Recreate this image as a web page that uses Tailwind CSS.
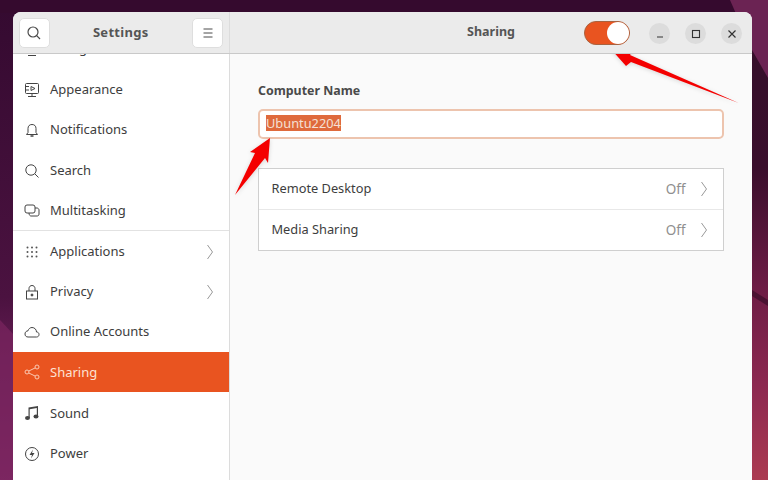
<!DOCTYPE html>
<html><head><meta charset="utf-8">
<script src="https://cdn.jsdelivr.net/npm/@tailwindcss/browser@4"></script>
</head>
<body class="m-0 overflow-hidden">
<div class="relative w-[768px] h-[480px] overflow-hidden pl-[12.5px] pr-4 pt-3 font-['Noto_Sans',sans-serif] bg-[#32082e]">
  <!-- wallpaper -->
  <svg class="absolute inset-0" width="768" height="480" viewBox="0 0 768 480">
    <defs>
      <linearGradient id="l" x1="0" y1="0" x2="0" y2="1"><stop offset="0" stop-color="#340a30"/><stop offset="0.62" stop-color="#4b1240"/><stop offset="0.72" stop-color="#5f1a4e"/><stop offset="1" stop-color="#7f2864"/></linearGradient>
      <linearGradient id="r" x1="0" y1="0" x2="0" y2="1"><stop offset="0" stop-color="#33102a"/><stop offset="0.35" stop-color="#3a0e2c"/><stop offset="0.6" stop-color="#6d1c45"/><stop offset="0.8" stop-color="#8c2850"/><stop offset="1" stop-color="#ab3a50"/></linearGradient>
    </defs>
    <rect x="0" y="0" width="14" height="480" fill="url(#l)"/>
    <rect x="750" y="0" width="18" height="480" fill="url(#r)"/>
    <rect x="0" y="0" width="768" height="13" fill="#350a2e"/>
    <path d="M730 0H768V78L752 50Z" fill="#6b2353"/>
    <path d="M752 290L768 300V306L752 296Z" fill="#4a1232"/>
    <path d="M0 320L14 335V480H0Z" fill="#7a2560" opacity=".7"/>
  </svg>
  <div class="relative flex flex-col w-[739.5px] h-[480px] rounded-t-[8px] overflow-hidden bg-[#fafafa] text-[#3d3d3d]">
    <div class="relative z-10 flex h-[42px] shrink-0 bg-[#ebebeb] border-b border-[#c9c9c9]">
      <div class="flex items-center justify-between w-[217.5px] pl-[6px] pr-[6px] border-r border-[#dcdcdc] shrink-0">
        <div class="w-[31px] h-[30px] bg-white rounded-[5px] border border-[#dedede] flex items-center justify-center">
          <svg width="16" height="16" viewBox="0 0 16 16" fill="none" stroke="#4a4a4a" stroke-width="1.2"><circle cx="7" cy="7" r="5"/><path d="M10.7 10.7L14 14"/></svg>
        </div>
        <span class="text-[13px] font-bold text-[#555] tracking-[0.3px]">Settings</span>
        <div class="w-[31px] h-[30px] bg-white rounded-[5px] border border-[#dedede] flex items-center justify-center">
          <svg width="14" height="14" viewBox="0 0 14 14" fill="none" stroke="#4a4a4a" stroke-width="1"><path d="M2.500 3H11.500M2.500 7H11.500M2.500 11H11.500"/></svg>
        </div>
      </div>
      <div class="flex-1 flex items-center relative">
        <span class="w-full text-center text-[12.5px] font-bold text-[#555]">Sharing</span>
        <div class="absolute left-[354px] top-[9px] w-[46px] h-[24px] rounded-full bg-[#e95420] border border-[#a9623f]">
          <div class="absolute right-0 top-0 w-[22px] h-[22px] rounded-full bg-white"></div>
        </div>
        <div class="absolute left-[419px] top-[11px] flex gap-[15px]">
          <div class="w-[21px] h-[21px] rounded-full bg-[#dcdcdc] flex items-center justify-center"><svg width="12" height="12" viewBox="0 0 12 12" fill="none" stroke="#333" stroke-width="1.1"><path d="M3 9H9"/></svg></div>
          <div class="w-[21px] h-[21px] rounded-full bg-[#dcdcdc] flex items-center justify-center"><svg width="12" height="12" viewBox="0 0 12 12" fill="none" stroke="#333" stroke-width="1.1"><rect x="2.500" y="2.500" width="7" height="7"/></svg></div>
          <div class="w-[21px] h-[21px] rounded-full bg-[#dcdcdc] flex items-center justify-center"><svg width="12" height="12" viewBox="0 0 12 12" fill="none" stroke="#333" stroke-width="1.2"><path d="M2.500 2.500L9.500 9.500M9.500 2.500L2.500 9.500"/></svg></div>
        </div>
      </div>
    </div>
    <div class="flex flex-1 min-h-0">
      <div class="w-[217.5px] shrink-0 bg-white border-r border-[#dcdcdc] flex flex-col text-[13px] text-[#3d3d3d] overflow-hidden">
        <div class="h-[40.5px] shrink-0 flex items-center mt-[-25.75px]"><span class="w-[37.5px] pl-[11.5px]"><svg width="16" height="16" viewBox="0 0 16 16" fill="none" stroke="#444" stroke-width="1"><rect x="1.500" y="1.500" width="13" height="10"/><path d="M4 14.500H12"/></svg></span><span>Background</span></div>
        <div class="h-[40.5px] shrink-0 flex items-center pt-px"><span class="w-[37.5px] pl-[11.5px]"><svg class="block" width="16" height="16" viewBox="0 0 16 16" fill="none" stroke="#444" stroke-width="1"><rect x="1.500" y="1.500" width="13" height="10" rx="1"/><path d="M4 14.500H12M8 11.500V14.500M1.500 4.500H5M1.500 8H5"/><path d="M7 4.500L11 6.500L7 8.500Z"/></svg></span><span>Appearance</span></div>
        <div class="h-[40.5px] shrink-0 flex items-center"><span class="w-[37.5px] pl-[11.5px]"><svg class="block" width="16" height="16" viewBox="0 0 16 16" fill="none" stroke="#444" stroke-width="1"><path d="M2.500 12.500H13.500L12 10.500V6.500C12 4 10.500 2.500 8 2.500C5.500 2.500 4 4 4 6.500V10.500Z"/><path d="M6.500 14H9.500" stroke-width="1.500"/></svg></span><span>Notifications</span></div>
        <div class="h-[40.5px] shrink-0 flex items-center pt-px"><span class="w-[37.5px] pl-[11.5px]"><svg class="block" width="16" height="16" viewBox="0 0 16 16" fill="none" stroke="#444" stroke-width="1"><circle cx="7" cy="7" r="5.200"/><path d="M10.800 10.800L14.500 14.500"/></svg></span><span>Search</span></div>
        <div class="h-[40.5px] shrink-0 flex items-center border-b border-[#e2e2e2] pt-px"><span class="w-[37.5px] pl-[11.5px]"><svg class="block" width="16" height="16" viewBox="0 0 16 16" fill="none" stroke="#444" stroke-width="1"><rect x="1" y="2" width="10" height="8" rx="2"/><path d="M11 5H13C14 5 15 6 15 7V11C15 12.500 14 13 13 13H7C6 13 5 12 5 10"/></svg></span><span>Multitasking</span></div>
        <div class="h-[40.5px] shrink-0 flex items-center pt-px"><span class="w-[37.5px] pl-[11.5px]"><svg class="block" width="16" height="16" viewBox="0 0 16 16" fill="#555"><circle cx="3.500" cy="3.500" r="1"/><circle cx="8" cy="3.500" r="1"/><circle cx="12.500" cy="3.500" r="1"/><circle cx="3.500" cy="8" r="1"/><circle cx="8" cy="8" r="1"/><circle cx="12.500" cy="8" r="1"/><circle cx="3.500" cy="12.500" r="1"/><circle cx="8" cy="12.500" r="1"/><circle cx="12.500" cy="12.500" r="1"/></svg></span><span class="flex-1">Applications</span><svg class="mr-[15px]" width="8" height="18" viewBox="0 0 8 18" fill="none" stroke="#999" stroke-width="1"><path d="M1.500 2L6.500 9L1.500 16"/></svg></div>
        <div class="h-[40.5px] shrink-0 flex items-center"><span class="w-[37.5px] pl-[11.5px]"><svg class="block" width="16" height="16" viewBox="0 0 16 16" fill="none" stroke="#444" stroke-width="1"><rect x="2.500" y="7" width="11" height="8"/><path d="M5 7V4.500C5 2.500 6.500 1.500 8 1.500C9.500 1.500 11 2.500 11 4.500V7"/><circle cx="8" cy="11" r="1" fill="#444"/></svg></span><span class="flex-1">Privacy</span><svg class="mr-[15px]" width="8" height="18" viewBox="0 0 8 18" fill="none" stroke="#999" stroke-width="1"><path d="M1.500 2L6.500 9L1.500 16"/></svg></div>
        <div class="h-[40.5px] shrink-0 flex items-center"><span class="w-[37.5px] pl-[11.5px]"><svg class="block" width="16" height="16" viewBox="0 0 16 16" fill="none" stroke="#444" stroke-width="1"><path d="M4 13H12.500C14 13 15 12 15 10.500C15 9 14 8 12.500 8C12.500 5.500 10.500 3.500 8 3.500C6 3.500 4.500 5 4 6.800C2.200 7 1 8.200 1 10C1 11.800 2.200 13 4 13Z"/></svg></span><span>Online Accounts</span></div>
        <div class="h-[40px] shrink-0 flex items-center bg-[#e95420] text-[#fde2d4]"><span class="w-[37.5px] pl-[11.5px]"><svg class="block" width="16" height="16" viewBox="0 0 16 16" fill="none" stroke="#fbc9b3" stroke-width="1"><circle cx="3" cy="8" r="2"/><circle cx="13" cy="3" r="2"/><circle cx="13" cy="13" r="2"/><path d="M4.800 7L11.200 3.900M4.800 9L11.200 12.100"/></svg></span><span>Sharing</span></div>
        <div class="h-[41px] shrink-0 flex items-center pt-px"><span class="w-[37.5px] pl-[11.5px]"><svg class="block" width="16" height="16" viewBox="0 0 16 16" fill="#444"><path d="M4.500 2.500L14 1V11H12.800V3L5.700 4.200V13H4.500Z"/><ellipse cx="3.500" cy="13" rx="2.500" ry="2"/><ellipse cx="12" cy="11.500" rx="2.500" ry="2"/></svg></span><span>Sound</span></div>
        <div class="h-[40.5px] shrink-0 flex items-center"><span class="w-[37.5px] pl-[11.5px]"><svg class="block" width="16" height="16" viewBox="0 0 16 16" fill="none" stroke="#444" stroke-width="1"><circle cx="8" cy="8" r="6.500"/><path d="M9 3.500L5.500 9H8L7 12.500L10.500 7H8Z" fill="#444" stroke="none"/></svg></span><span>Power</span></div>
      </div>
      <div class="flex-1 pl-[28px] pr-[28px] pt-[28px] text-[12.8px]">
        <div class="text-[12.4px] font-bold text-[#4a4a4a] leading-[18px]">Computer Name</div>
        <div class="mt-[9px] h-[30px] rounded-[5px] bg-white border-2 border-[#edc4ae] flex items-center pl-[6px] pb-[2px] text-[#f5e0d5]">
          <span class="bg-[#df6a3c] leading-[16px]">Ubuntu2204</span>
        </div>
        <div class="mt-[29px] bg-white border border-[#cfcfcf] text-[#3d3d3d]">
          <div class="h-[41px] flex items-center pl-[12.5px] pr-[15.500px] border-b border-[#e8e8e8]"><span class="flex-1">Remote Desktop</span><span class="text-[#8f8f8f] mr-[14px] text-[13.5px]">Off</span><svg width="8" height="18" viewBox="0 0 8 18" fill="none" stroke="#999" stroke-width="1"><path d="M1.500 2L6.500 9L1.500 16"/></svg></div>
          <div class="h-[40px] flex items-center pl-[12.5px] pr-[15.500px]"><span class="flex-1">Media Sharing</span><span class="text-[#8f8f8f] mr-[14px] text-[13.5px]">Off</span><svg width="8" height="18" viewBox="0 0 8 18" fill="none" stroke="#999" stroke-width="1"><path d="M1.500 2L6.500 9L1.500 16"/></svg></div>
        </div>
      </div>
    </div>
  </div>
  <!-- annotation arrows -->
  <svg class="absolute inset-0 pointer-events-none drop-shadow-sm" width="768" height="480" viewBox="0 0 768 480">
    <path d="M738.700 103L631 62L626 66L610 48L634 49L630 55Z" fill="#f40000"/>
    <path d="M235 195L255 153L250 152L270 138L268 163L265 158Z" fill="#f40000"/>
  </svg>
</div>
</body></html>
